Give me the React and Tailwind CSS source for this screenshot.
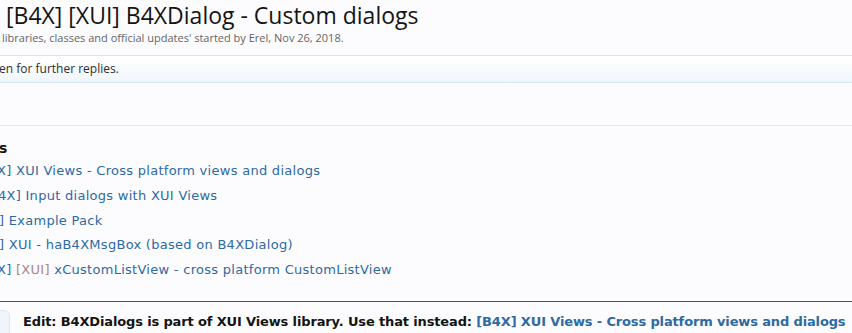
import React from "react";

const links = [
	{ pre: "", text: "X] XUI Views - Cross platform views and dialogs", cut: "-ml-[3px]" },
	{ pre: "", text: "4X] Input dialogs with XUI Views", cut: "-ml-[2px]" },
	{ pre: "", text: "] Example Pack", cut: "-ml-[1px]" },
	{ pre: "", text: "] XUI - haB4XMsgBox (based on B4XDialog)", cut: "-ml-[1px]" },
	{ pre: "X] ", tag: "[XUI]", text: " xCustomListView - cross platform CustomListView", cut: "-ml-[3px]" }
];

function LinkRow({ pre, tag, text, cut }) {
	return (
		<div className={`h-[24.75px] leading-[24.75px] whitespace-nowrap ${cut}`}>
			{tag ? (
				<>
					<span>{pre}</span>
					<span className="text-[#a8867f]">{tag}</span>
					<span>{text}</span>
				</>
			) : (
				text
			)}
		</div>
	);
}

export default function App() {
	return (
		<div className="w-[852px] h-[333px] overflow-hidden bg-[#fcfcff] font-['Open_Sans',sans-serif]">
			{/* thread title */}
			<div className="pl-[6px] h-[30px] text-[23px] leading-[30px] text-[#141414] whitespace-nowrap">
				[B4X] [XUI] B4XDialog - Custom dialogs
			</div>
			<div className="pl-[2px] h-[15px] text-[11px] leading-[15px] text-[#646464] whitespace-nowrap">
				libraries, classes and official updates' started by Erel, Nov 26, 2018.
			</div>

			<div className="mt-[10px] h-[28px] border-y border-[#d5e7f6] bg-gradient-to-b from-white to-[#eff6fb] flex items-center">
				<span className="-ml-[1px] text-[12px] text-[#2f2f2f] whitespace-nowrap">en for further replies.</span>
			</div>

			<div className="h-[43px] border-b border-[#dce8f2]" />

			{/* similar threads */}
			<div className="pt-[12px] h-[32px] text-[14px] leading-[20px] font-bold text-[#141414] font-['DejaVu_Sans',sans-serif]">
				<span className="-ml-[1px] inline-block">s</span>
			</div>
			<div className="pt-[1px] text-[13px] tracking-[0.28px] text-[#2e6aa1] font-['DejaVu_Sans',sans-serif]">
				{links.map((l, i) => (
					<LinkRow key={i} {...l} />
				))}
			</div>

			{/* first post */}
			<div className="mt-[18px] border-t border-[#2b5a8a] flex">
				<div className="shrink-0 mt-[8px] w-[14px] h-[30px] -ml-[4px] rounded-tr-[6px] border border-[#dbe7f3] bg-[#f0f5fb]" />
				<div className="ml-[13px] mt-[10px] text-[13px] tracking-[-0.14px] font-bold text-[#141414] whitespace-nowrap font-['DejaVu_Sans',sans-serif]">
					Edit: B4XDialogs is part of XUI Views library. Use that instead:{" "}
					<span className="text-[#2e6aa1]">[B4X] XUI Views - Cross platform views and dialogs</span>
				</div>
			</div>
		</div>
	);
}
